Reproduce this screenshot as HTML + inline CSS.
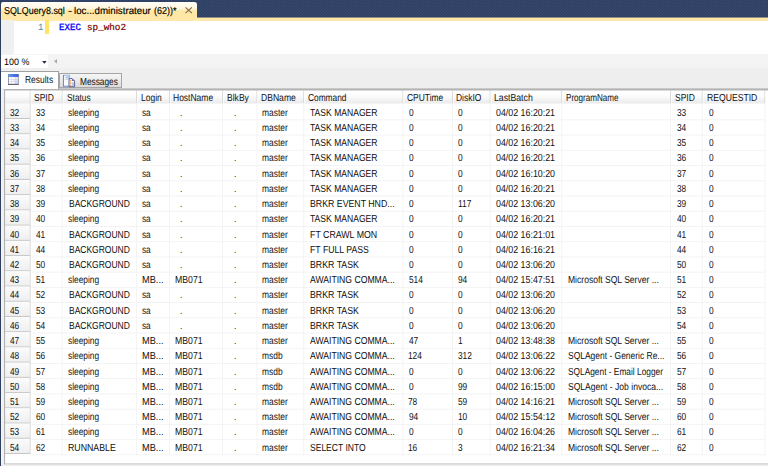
<!DOCTYPE html>
<html><head><meta charset="utf-8"><title>SQLQuery8.sql</title>
<style>
html,body{margin:0;padding:0;}
body{width:768px;height:466px;overflow:hidden;background:#fff;position:relative;font-family:"Liberation Sans",sans-serif;}
div,span{position:absolute;box-sizing:border-box;white-space:nowrap;}
.t{transform-origin:0 0;text-rendering:geometricPrecision;}
.vl{width:1px;background:#e6e6e6;}
.hl{height:1px;background:#ececec;}
svg{position:absolute;overflow:visible}
</style></head><body>

<div style="left:0;top:0;width:768px;height:18px;background-color:#2d3e61;background-image:radial-gradient(circle at 0.75px 0.75px,#374a6e 0.6px,rgba(55,74,110,0) 1px),radial-gradient(circle at 2.25px 2.25px,#374a6e 0.6px,rgba(55,74,110,0) 1px);background-size:3px 3px"></div>
<div style="left:0;top:18px;width:768px;height:2.6px;background:#ffe9a8"></div><div style="left:197.4px;top:17px;width:571px;height:1px;background:#948f84"></div>
<div style="left:1.2px;top:1.7px;width:196.2px;height:17px;background:linear-gradient(#fffdf7,#fff7e0 36%,#ffeaae 50%,#ffe8a6 58%);border-radius:2px 2.5px 0 0"></div>
<span class="t" style="left:4.30px;top:5.00px;font-size:10.00px;line-height:13px;color:#000;transform:scaleX(0.8892);-webkit-text-stroke:0.15px #000;">SQLQuery8.sql</span>
<span class="t" style="left:67.93px;top:5.00px;font-size:10.00px;line-height:13px;color:#000;transform:scaleX(1.2653);-webkit-text-stroke:0.15px #000;">-</span>
<span class="t" style="left:74.17px;top:5.00px;font-size:10.00px;line-height:13px;color:#000;transform:scaleX(0.9738);-webkit-text-stroke:0.15px #000;">loc...dministrateur</span>
<span class="t" style="left:154.36px;top:5.00px;font-size:10.00px;line-height:13px;color:#000;transform:scaleX(0.8948);-webkit-text-stroke:0.15px #000;">(62))*</span>
<svg style="left:185.3px;top:7.2px" width="7.4" height="6.6" viewBox="0 0 7.4 6.6"><path d="M0.5 0.4L6.9 6.2M6.9 0.4L0.5 6.2" stroke="#80604a" stroke-width="1.05" fill="none"/></svg>
<div style="left:0;top:20.4px;width:14px;height:34px;background:#f0f0f0"></div>
<span class="t" style="left:38.09px;top:21.00px;font-size:9.40px;line-height:13px;color:#2b91af;transform:scaleX(0.9300);font-family:'Liberation Mono',monospace;">1</span>
<div style="left:44.8px;top:20.4px;width:4.2px;height:13.2px;background:#ffe566"></div>
<span class="t" style="left:59.27px;top:21.00px;font-size:9.40px;line-height:13px;color:#0000ff;transform:scaleX(0.9750);font-family:'Liberation Mono',monospace;-webkit-text-stroke:0.3px #0000ff;">EXEC</span>
<span class="t" style="left:86.86px;top:21.00px;font-size:9.40px;line-height:13px;color:#800000;transform:scaleX(0.9900);font-family:'Liberation Mono',monospace;-webkit-text-stroke:0.2px #800000;">sp_who2</span>
<div style="left:0;top:54.2px;width:768px;height:36px;background:linear-gradient(#f4f4f4,#f3f3f3 13.8px,#efefef 14.6px,#eeeeee)"></div>
<div style="left:1.3px;top:55px;width:46.9px;height:12.5px;background:#fff"></div>
<span class="t" style="left:4.13px;top:55.00px;font-size:9.40px;line-height:13px;color:#000;transform:scaleX(0.9526);">100 %</span>
<svg style="left:41.7px;top:60.6px" width="4.8" height="2.7" viewBox="0 0 5 3"><path d="M0 0H5L2.5 3Z" fill="#1b2550"/></svg>
<svg style="left:53.7px;top:58.9px" width="3" height="4.4" viewBox="0 0 3 4.4"><path d="M3 0V4.4L0 2.2Z" fill="#a8a8a8"/></svg>
<div style="left:58px;top:88px;width:710px;height:1px;background:#c9c9c9"></div>
<div style="left:58.6px;top:73.2px;width:63.4px;height:15px;background:linear-gradient(#f6f6f6,#e9e9e9 55%,#dadada);border:1px solid #a6a6a6"></div>
<span class="t" style="left:79.93px;top:76.00px;font-size:10.20px;line-height:13px;color:#111;transform:scaleX(0.8161);">Messages</span>
<div style="left:1.3px;top:71.2px;width:57.6px;height:17.6px;background:#fff;border:1px solid #a0a0a0;border-bottom:none;border-left:none"></div>
<span class="t" style="left:25.12px;top:74.00px;font-size:10.20px;line-height:13px;color:#111;transform:scaleX(0.8282);">Results</span>
<svg style="left:8.2px;top:74.1px" width="10.7" height="10.7" viewBox="0 0 10.7 10.7"><defs><linearGradient id="bh" x1="0" y1="0" x2="1" y2="0"><stop offset="0" stop-color="#62a0ea"/><stop offset="0.45" stop-color="#4a78ea"/><stop offset="1" stop-color="#3c55e4"/></linearGradient></defs><rect x="0" y="0" width="10.7" height="10.7" fill="#777a8c"/><rect x="0.3" y="0" width="10.1" height="2.9" fill="url(#bh)"/><rect x="0.7" y="2.9" width="9.4" height="7.0" fill="#c3c3dc"/><rect x="0.9" y="3.2" width="2.7" height="1.9" fill="#fff"/><rect x="4.0" y="3.2" width="2.7" height="1.9" fill="#fff"/><rect x="7.1" y="3.2" width="2.8" height="1.9" fill="#e3ecf8"/><rect x="0.9" y="5.5" width="2.7" height="1.9" fill="#fff"/><rect x="4.0" y="5.5" width="2.7" height="1.9" fill="#f4f6fb"/><rect x="7.1" y="5.5" width="2.8" height="1.9" fill="#d5e3f5"/><rect x="0.9" y="7.8" width="2.7" height="1.9" fill="#fff"/><rect x="4.0" y="7.8" width="2.7" height="1.9" fill="#fff"/><rect x="7.1" y="7.8" width="2.8" height="1.9" fill="#cfe0f4"/><rect x="0" y="9.95" width="10.7" height="0.75" fill="#4a4a52"/></svg>
<svg style="left:63px;top:74.8px" width="12" height="12" viewBox="0 0 12 12"><rect x="0.3" y="0.2" width="6.4" height="11.4" fill="#fbfcff" stroke="#8d86d6" stroke-width="0.7"/><rect x="0.1" y="0.2" width="0.8" height="11.4" fill="#7a70d2"/><rect x="3.2" y="0.4" width="3.4" height="3.2" fill="#a8d4ef"/><path d="M1.6 2.6H5M1.6 4.6H5.6" stroke="#b9bcc8" stroke-width="0.6"/><rect x="0.6" y="10.6" width="6" height="1" fill="#7fa6dc"/><path d="M6 3.6H9.2L11.6 6V11.7H6Z" fill="#fdfdfd" stroke="#3b3a86" stroke-width="0.8"/><path d="M9.1 3.7V6.1H11.5Z" fill="#5b58a8"/><rect x="6.7" y="5.0" width="1.7" height="1.5" fill="#f2a64a"/><rect x="6.7" y="7.4" width="1.7" height="1.5" fill="#f2a64a"/><rect x="6.7" y="9.6" width="1.7" height="1.5" fill="#f2a64a"/><rect x="9" y="7.2" width="2" height="3.8" fill="#8fb7e6" opacity="0.7"/></svg>
<svg style="left:0;top:0" width="768" height="466" viewBox="0 0 768 466"><defs><linearGradient id="hg" x1="0" y1="0" x2="0" y2="1"><stop offset="0" stop-color="#ffffff"/><stop offset="0.45" stop-color="#fbfbfb"/><stop offset="1" stop-color="#ebebeb"/></linearGradient><linearGradient id="rg" x1="0" y1="0" x2="0" y2="1"><stop offset="0" stop-color="#fbfbfb"/><stop offset="1" stop-color="#efefef"/></linearGradient></defs><rect x="1.30" y="88.30" width="3.00" height="378.00" fill="#f0f0f0"/><rect x="4.30" y="89.30" width="764.00" height="374.60" fill="#ffffff"/><rect x="0.00" y="464.30" width="768.00" height="2.00" fill="#eeeeee"/><rect x="4.30" y="463.40" width="764.00" height="1.00" fill="#c4c4c4"/><rect x="4.60" y="90.30" width="761.00" height="13.10" fill="url(#hg)"/><rect x="4.60" y="103.10" width="761.00" height="0.90" fill="#f3f3f3"/><rect x="5.00" y="104.00" width="25.10" height="14.12" fill="url(#rg)"/><rect x="5.00" y="118.03" width="25.50" height="1.00" fill="#c6c6c6"/><rect x="30.30" y="119.43" width="735.30" height="0.90" fill="#f2f2f2"/><rect x="5.00" y="119.22" width="25.10" height="14.12" fill="url(#rg)"/><rect x="5.00" y="133.25" width="25.50" height="1.00" fill="#c6c6c6"/><rect x="30.30" y="134.65" width="735.30" height="0.90" fill="#f2f2f2"/><rect x="5.00" y="134.45" width="25.10" height="14.12" fill="url(#rg)"/><rect x="5.00" y="148.47" width="25.50" height="1.00" fill="#c6c6c6"/><rect x="30.30" y="149.88" width="735.30" height="0.90" fill="#f2f2f2"/><rect x="5.00" y="149.67" width="25.10" height="14.12" fill="url(#rg)"/><rect x="5.00" y="163.70" width="25.50" height="1.00" fill="#c6c6c6"/><rect x="30.30" y="165.10" width="735.30" height="0.90" fill="#f2f2f2"/><rect x="5.00" y="164.90" width="25.10" height="14.12" fill="url(#rg)"/><rect x="5.00" y="178.93" width="25.50" height="1.00" fill="#c6c6c6"/><rect x="30.30" y="180.33" width="735.30" height="0.90" fill="#f2f2f2"/><rect x="5.00" y="180.12" width="25.10" height="14.12" fill="url(#rg)"/><rect x="5.00" y="194.15" width="25.50" height="1.00" fill="#c6c6c6"/><rect x="30.30" y="195.55" width="735.30" height="0.90" fill="#f2f2f2"/><rect x="5.00" y="195.35" width="25.10" height="14.12" fill="url(#rg)"/><rect x="5.00" y="209.38" width="25.50" height="1.00" fill="#c6c6c6"/><rect x="30.30" y="210.78" width="735.30" height="0.90" fill="#f2f2f2"/><rect x="5.00" y="210.58" width="25.10" height="14.12" fill="url(#rg)"/><rect x="5.00" y="224.60" width="25.50" height="1.00" fill="#c6c6c6"/><rect x="30.30" y="226.00" width="735.30" height="0.90" fill="#f2f2f2"/><rect x="5.00" y="225.80" width="25.10" height="14.12" fill="url(#rg)"/><rect x="5.00" y="239.82" width="25.50" height="1.00" fill="#c6c6c6"/><rect x="30.30" y="241.22" width="735.30" height="0.90" fill="#f2f2f2"/><rect x="5.00" y="241.03" width="25.10" height="14.12" fill="url(#rg)"/><rect x="5.00" y="255.05" width="25.50" height="1.00" fill="#c6c6c6"/><rect x="30.30" y="256.45" width="735.30" height="0.90" fill="#f2f2f2"/><rect x="5.00" y="256.25" width="25.10" height="14.12" fill="url(#rg)"/><rect x="5.00" y="270.27" width="25.50" height="1.00" fill="#c6c6c6"/><rect x="30.30" y="271.67" width="735.30" height="0.90" fill="#f2f2f2"/><rect x="5.00" y="271.48" width="25.10" height="14.12" fill="url(#rg)"/><rect x="5.00" y="285.50" width="25.50" height="1.00" fill="#c6c6c6"/><rect x="30.30" y="286.90" width="735.30" height="0.90" fill="#f2f2f2"/><rect x="5.00" y="286.70" width="25.10" height="14.12" fill="url(#rg)"/><rect x="5.00" y="300.73" width="25.50" height="1.00" fill="#c6c6c6"/><rect x="30.30" y="302.12" width="735.30" height="0.90" fill="#f2f2f2"/><rect x="5.00" y="301.93" width="25.10" height="14.12" fill="url(#rg)"/><rect x="5.00" y="315.95" width="25.50" height="1.00" fill="#c6c6c6"/><rect x="30.30" y="317.35" width="735.30" height="0.90" fill="#f2f2f2"/><rect x="5.00" y="317.15" width="25.10" height="14.12" fill="url(#rg)"/><rect x="5.00" y="331.18" width="25.50" height="1.00" fill="#c6c6c6"/><rect x="30.30" y="332.57" width="735.30" height="0.90" fill="#f2f2f2"/><rect x="5.00" y="332.38" width="25.10" height="14.12" fill="url(#rg)"/><rect x="5.00" y="346.40" width="25.50" height="1.00" fill="#c6c6c6"/><rect x="30.30" y="347.80" width="735.30" height="0.90" fill="#f2f2f2"/><rect x="5.00" y="347.60" width="25.10" height="14.12" fill="url(#rg)"/><rect x="5.00" y="361.62" width="25.50" height="1.00" fill="#c6c6c6"/><rect x="30.30" y="363.02" width="735.30" height="0.90" fill="#f2f2f2"/><rect x="5.00" y="362.83" width="25.10" height="14.12" fill="url(#rg)"/><rect x="5.00" y="376.85" width="25.50" height="1.00" fill="#c6c6c6"/><rect x="30.30" y="378.25" width="735.30" height="0.90" fill="#f2f2f2"/><rect x="5.00" y="378.05" width="25.10" height="14.12" fill="url(#rg)"/><rect x="5.00" y="392.08" width="25.50" height="1.00" fill="#c6c6c6"/><rect x="30.30" y="393.48" width="735.30" height="0.90" fill="#f2f2f2"/><rect x="5.00" y="393.27" width="25.10" height="14.12" fill="url(#rg)"/><rect x="5.00" y="407.30" width="25.50" height="1.00" fill="#c6c6c6"/><rect x="30.30" y="408.70" width="735.30" height="0.90" fill="#f2f2f2"/><rect x="5.00" y="408.50" width="25.10" height="14.12" fill="url(#rg)"/><rect x="5.00" y="422.52" width="25.50" height="1.00" fill="#c6c6c6"/><rect x="30.30" y="423.92" width="735.30" height="0.90" fill="#f2f2f2"/><rect x="5.00" y="423.73" width="25.10" height="14.12" fill="url(#rg)"/><rect x="5.00" y="437.75" width="25.50" height="1.00" fill="#c6c6c6"/><rect x="30.30" y="439.15" width="735.30" height="0.90" fill="#f2f2f2"/><rect x="5.00" y="438.95" width="25.10" height="14.12" fill="url(#rg)"/><rect x="5.00" y="452.98" width="25.50" height="1.00" fill="#c6c6c6"/><rect x="30.30" y="454.38" width="735.30" height="0.90" fill="#f2f2f2"/><rect x="29.70" y="103.40" width="1.00" height="350.18" fill="#dcdcdc"/><rect x="29.80" y="90.60" width="0.90" height="12.40" fill="#d2d2d2"/><rect x="30.70" y="90.60" width="0.80" height="12.40" fill="#ffffff"/><rect x="61.70" y="90.60" width="0.90" height="12.40" fill="#d2d2d2"/><rect x="62.60" y="90.60" width="0.80" height="12.40" fill="#ffffff"/><rect x="136.00" y="90.60" width="0.90" height="12.40" fill="#d2d2d2"/><rect x="136.90" y="90.60" width="0.80" height="12.40" fill="#ffffff"/><rect x="169.00" y="90.60" width="0.90" height="12.40" fill="#d2d2d2"/><rect x="169.90" y="90.60" width="0.80" height="12.40" fill="#ffffff"/><rect x="222.00" y="90.60" width="0.90" height="12.40" fill="#d2d2d2"/><rect x="222.90" y="90.60" width="0.80" height="12.40" fill="#ffffff"/><rect x="256.50" y="90.60" width="0.90" height="12.40" fill="#d2d2d2"/><rect x="257.40" y="90.60" width="0.80" height="12.40" fill="#ffffff"/><rect x="303.30" y="90.60" width="0.90" height="12.40" fill="#d2d2d2"/><rect x="304.20" y="90.60" width="0.80" height="12.40" fill="#ffffff"/><rect x="402.50" y="90.60" width="0.90" height="12.40" fill="#d2d2d2"/><rect x="403.40" y="90.60" width="0.80" height="12.40" fill="#ffffff"/><rect x="452.00" y="90.60" width="0.90" height="12.40" fill="#d2d2d2"/><rect x="452.90" y="90.60" width="0.80" height="12.40" fill="#ffffff"/><rect x="489.70" y="90.60" width="0.90" height="12.40" fill="#d2d2d2"/><rect x="490.60" y="90.60" width="0.80" height="12.40" fill="#ffffff"/><rect x="561.30" y="90.60" width="0.90" height="12.40" fill="#d2d2d2"/><rect x="562.20" y="90.60" width="0.80" height="12.40" fill="#ffffff"/><rect x="670.00" y="90.60" width="0.90" height="12.40" fill="#d2d2d2"/><rect x="670.90" y="90.60" width="0.80" height="12.40" fill="#ffffff"/><rect x="701.80" y="90.60" width="0.90" height="12.40" fill="#d2d2d2"/><rect x="702.70" y="90.60" width="0.80" height="12.40" fill="#ffffff"/><rect x="764.50" y="90.60" width="0.90" height="12.40" fill="#d2d2d2"/><rect x="765.40" y="90.60" width="0.80" height="12.40" fill="#ffffff"/><rect x="61.70" y="103.90" width="0.90" height="351.58" fill="#f3f3f3"/><rect x="136.00" y="103.90" width="0.90" height="351.58" fill="#f3f3f3"/><rect x="169.00" y="103.90" width="0.90" height="351.58" fill="#f3f3f3"/><rect x="222.00" y="103.90" width="0.90" height="351.58" fill="#f3f3f3"/><rect x="256.50" y="103.90" width="0.90" height="351.58" fill="#f3f3f3"/><rect x="303.30" y="103.90" width="0.90" height="351.58" fill="#f3f3f3"/><rect x="402.50" y="103.90" width="0.90" height="351.58" fill="#f3f3f3"/><rect x="452.00" y="103.90" width="0.90" height="351.58" fill="#f3f3f3"/><rect x="489.70" y="103.90" width="0.90" height="351.58" fill="#f3f3f3"/><rect x="561.30" y="103.90" width="0.90" height="351.58" fill="#f3f3f3"/><rect x="670.00" y="103.90" width="0.90" height="351.58" fill="#f3f3f3"/><rect x="701.80" y="103.90" width="0.90" height="351.58" fill="#f3f3f3"/><rect x="764.50" y="103.90" width="0.90" height="351.58" fill="#f3f3f3"/><rect x="4.00" y="89.20" width="764.00" height="1.20" fill="#a2a2a2"/><rect x="4.00" y="89.20" width="1.10" height="375.00" fill="#b2b2b2"/></svg>
<span class="t" style="left:34.12px;top:92.00px;font-size:10.20px;line-height:13px;color:#111;transform:scaleX(0.8316);">SPID</span>
<span class="t" style="left:67.12px;top:92.00px;font-size:10.20px;line-height:13px;color:#111;transform:scaleX(0.8185);">Status</span>
<span class="t" style="left:140.57px;top:92.00px;font-size:10.20px;line-height:13px;color:#111;transform:scaleX(0.8312);">Login</span>
<span class="t" style="left:173.07px;top:92.00px;font-size:10.20px;line-height:13px;color:#111;transform:scaleX(0.8346);">HostName</span>
<span class="t" style="left:226.81px;top:92.00px;font-size:10.20px;line-height:13px;color:#111;transform:scaleX(0.8398);">BlkBy</span>
<span class="t" style="left:260.56px;top:92.00px;font-size:10.20px;line-height:13px;color:#111;transform:scaleX(0.8421);">DBName</span>
<span class="t" style="left:307.58px;top:92.00px;font-size:10.20px;line-height:13px;color:#111;transform:scaleX(0.8170);">Command</span>
<span class="t" style="left:406.58px;top:92.00px;font-size:10.20px;line-height:13px;color:#111;transform:scaleX(0.8277);">CPUTime</span>
<span class="t" style="left:456.33px;top:92.00px;font-size:10.20px;line-height:13px;color:#111;transform:scaleX(0.8267);">DiskIO</span>
<span class="t" style="left:493.80px;top:92.00px;font-size:10.20px;line-height:13px;color:#111;transform:scaleX(0.8550);">LastBatch</span>
<span class="t" style="left:566.35px;top:92.00px;font-size:10.20px;line-height:13px;color:#111;transform:scaleX(0.7929);">ProgramName</span>
<span class="t" style="left:675.12px;top:92.00px;font-size:10.20px;line-height:13px;color:#111;transform:scaleX(0.8316);">SPID</span>
<span class="t" style="left:706.56px;top:92.00px;font-size:10.20px;line-height:13px;color:#111;transform:scaleX(0.8455);">REQUESTID</span>
<span class="t" style="left:9.87px;top:107.00px;font-size:10.20px;line-height:13px;color:#111;transform:scaleX(0.8160);">32</span>
<span class="t" style="left:35.87px;top:107.00px;font-size:10.20px;line-height:13px;color:#111;transform:scaleX(0.8160);">33</span>
<span class="t" style="left:68.39px;top:107.00px;font-size:10.20px;line-height:13px;color:#111;transform:scaleX(0.8188);">sleeping</span>
<span class="t" style="left:141.99px;top:107.00px;font-size:10.20px;line-height:13px;color:#111;transform:scaleX(0.8091);">sa</span>
<span class="t" style="left:180.15px;top:107.00px;font-size:10.20px;line-height:13px;color:#111;transform:scaleX(0.8160);">.</span>
<span class="t" style="left:233.85px;top:107.00px;font-size:10.20px;line-height:13px;color:#111;transform:scaleX(0.8160);">.</span>
<span class="t" style="left:261.65px;top:107.00px;font-size:10.20px;line-height:13px;color:#111;transform:scaleX(0.8258);">master</span>
<span class="t" style="left:310.13px;top:107.00px;font-size:10.20px;line-height:13px;color:#111;transform:scaleX(0.8416);">TASK MANAGER</span>
<span class="t" style="left:408.57px;top:107.00px;font-size:10.20px;line-height:13px;color:#111;transform:scaleX(0.8160);">0</span>
<span class="t" style="left:458.27px;top:107.00px;font-size:10.20px;line-height:13px;color:#111;transform:scaleX(0.8160);">0</span>
<span class="t" style="left:496.05px;top:107.00px;font-size:10.20px;line-height:13px;color:#111;transform:scaleX(0.8680);">04/02 16:20:21</span>
<span class="t" style="left:676.67px;top:107.00px;font-size:10.20px;line-height:13px;color:#111;transform:scaleX(0.8160);">33</span>
<span class="t" style="left:708.67px;top:107.00px;font-size:10.20px;line-height:13px;color:#111;transform:scaleX(0.8160);">0</span>
<span class="t" style="left:9.87px;top:122.00px;font-size:10.20px;line-height:13px;color:#111;transform:scaleX(0.8160);">33</span>
<span class="t" style="left:35.87px;top:122.00px;font-size:10.20px;line-height:13px;color:#111;transform:scaleX(0.8160);">34</span>
<span class="t" style="left:68.39px;top:122.00px;font-size:10.20px;line-height:13px;color:#111;transform:scaleX(0.8188);">sleeping</span>
<span class="t" style="left:141.99px;top:122.00px;font-size:10.20px;line-height:13px;color:#111;transform:scaleX(0.8091);">sa</span>
<span class="t" style="left:180.15px;top:122.00px;font-size:10.20px;line-height:13px;color:#111;transform:scaleX(0.8160);">.</span>
<span class="t" style="left:233.85px;top:122.00px;font-size:10.20px;line-height:13px;color:#111;transform:scaleX(0.8160);">.</span>
<span class="t" style="left:261.65px;top:122.00px;font-size:10.20px;line-height:13px;color:#111;transform:scaleX(0.8258);">master</span>
<span class="t" style="left:310.13px;top:122.00px;font-size:10.20px;line-height:13px;color:#111;transform:scaleX(0.8416);">TASK MANAGER</span>
<span class="t" style="left:408.57px;top:122.00px;font-size:10.20px;line-height:13px;color:#111;transform:scaleX(0.8160);">0</span>
<span class="t" style="left:458.27px;top:122.00px;font-size:10.20px;line-height:13px;color:#111;transform:scaleX(0.8160);">0</span>
<span class="t" style="left:496.05px;top:122.00px;font-size:10.20px;line-height:13px;color:#111;transform:scaleX(0.8680);">04/02 16:20:21</span>
<span class="t" style="left:676.67px;top:122.00px;font-size:10.20px;line-height:13px;color:#111;transform:scaleX(0.8160);">34</span>
<span class="t" style="left:708.67px;top:122.00px;font-size:10.20px;line-height:13px;color:#111;transform:scaleX(0.8160);">0</span>
<span class="t" style="left:9.87px;top:137.00px;font-size:10.20px;line-height:13px;color:#111;transform:scaleX(0.8160);">34</span>
<span class="t" style="left:35.87px;top:137.00px;font-size:10.20px;line-height:13px;color:#111;transform:scaleX(0.8160);">35</span>
<span class="t" style="left:68.39px;top:137.00px;font-size:10.20px;line-height:13px;color:#111;transform:scaleX(0.8188);">sleeping</span>
<span class="t" style="left:141.99px;top:137.00px;font-size:10.20px;line-height:13px;color:#111;transform:scaleX(0.8091);">sa</span>
<span class="t" style="left:180.15px;top:137.00px;font-size:10.20px;line-height:13px;color:#111;transform:scaleX(0.8160);">.</span>
<span class="t" style="left:233.85px;top:137.00px;font-size:10.20px;line-height:13px;color:#111;transform:scaleX(0.8160);">.</span>
<span class="t" style="left:261.65px;top:137.00px;font-size:10.20px;line-height:13px;color:#111;transform:scaleX(0.8258);">master</span>
<span class="t" style="left:310.13px;top:137.00px;font-size:10.20px;line-height:13px;color:#111;transform:scaleX(0.8416);">TASK MANAGER</span>
<span class="t" style="left:408.57px;top:137.00px;font-size:10.20px;line-height:13px;color:#111;transform:scaleX(0.8160);">0</span>
<span class="t" style="left:458.27px;top:137.00px;font-size:10.20px;line-height:13px;color:#111;transform:scaleX(0.8160);">0</span>
<span class="t" style="left:496.05px;top:137.00px;font-size:10.20px;line-height:13px;color:#111;transform:scaleX(0.8680);">04/02 16:20:21</span>
<span class="t" style="left:676.67px;top:137.00px;font-size:10.20px;line-height:13px;color:#111;transform:scaleX(0.8160);">35</span>
<span class="t" style="left:708.67px;top:137.00px;font-size:10.20px;line-height:13px;color:#111;transform:scaleX(0.8160);">0</span>
<span class="t" style="left:9.87px;top:152.00px;font-size:10.20px;line-height:13px;color:#111;transform:scaleX(0.8160);">35</span>
<span class="t" style="left:35.87px;top:152.00px;font-size:10.20px;line-height:13px;color:#111;transform:scaleX(0.8160);">36</span>
<span class="t" style="left:68.39px;top:152.00px;font-size:10.20px;line-height:13px;color:#111;transform:scaleX(0.8188);">sleeping</span>
<span class="t" style="left:141.99px;top:152.00px;font-size:10.20px;line-height:13px;color:#111;transform:scaleX(0.8091);">sa</span>
<span class="t" style="left:180.15px;top:152.00px;font-size:10.20px;line-height:13px;color:#111;transform:scaleX(0.8160);">.</span>
<span class="t" style="left:233.85px;top:152.00px;font-size:10.20px;line-height:13px;color:#111;transform:scaleX(0.8160);">.</span>
<span class="t" style="left:261.65px;top:152.00px;font-size:10.20px;line-height:13px;color:#111;transform:scaleX(0.8258);">master</span>
<span class="t" style="left:310.13px;top:152.00px;font-size:10.20px;line-height:13px;color:#111;transform:scaleX(0.8416);">TASK MANAGER</span>
<span class="t" style="left:408.57px;top:152.00px;font-size:10.20px;line-height:13px;color:#111;transform:scaleX(0.8160);">0</span>
<span class="t" style="left:458.27px;top:152.00px;font-size:10.20px;line-height:13px;color:#111;transform:scaleX(0.8160);">0</span>
<span class="t" style="left:496.05px;top:152.00px;font-size:10.20px;line-height:13px;color:#111;transform:scaleX(0.8680);">04/02 16:20:21</span>
<span class="t" style="left:676.67px;top:152.00px;font-size:10.20px;line-height:13px;color:#111;transform:scaleX(0.8160);">36</span>
<span class="t" style="left:708.67px;top:152.00px;font-size:10.20px;line-height:13px;color:#111;transform:scaleX(0.8160);">0</span>
<span class="t" style="left:9.87px;top:168.00px;font-size:10.20px;line-height:13px;color:#111;transform:scaleX(0.8160);">36</span>
<span class="t" style="left:35.87px;top:168.00px;font-size:10.20px;line-height:13px;color:#111;transform:scaleX(0.8160);">37</span>
<span class="t" style="left:68.39px;top:168.00px;font-size:10.20px;line-height:13px;color:#111;transform:scaleX(0.8188);">sleeping</span>
<span class="t" style="left:141.99px;top:168.00px;font-size:10.20px;line-height:13px;color:#111;transform:scaleX(0.8091);">sa</span>
<span class="t" style="left:180.15px;top:168.00px;font-size:10.20px;line-height:13px;color:#111;transform:scaleX(0.8160);">.</span>
<span class="t" style="left:233.85px;top:168.00px;font-size:10.20px;line-height:13px;color:#111;transform:scaleX(0.8160);">.</span>
<span class="t" style="left:261.65px;top:168.00px;font-size:10.20px;line-height:13px;color:#111;transform:scaleX(0.8258);">master</span>
<span class="t" style="left:310.13px;top:168.00px;font-size:10.20px;line-height:13px;color:#111;transform:scaleX(0.8416);">TASK MANAGER</span>
<span class="t" style="left:408.57px;top:168.00px;font-size:10.20px;line-height:13px;color:#111;transform:scaleX(0.8160);">0</span>
<span class="t" style="left:458.27px;top:168.00px;font-size:10.20px;line-height:13px;color:#111;transform:scaleX(0.8160);">0</span>
<span class="t" style="left:496.05px;top:168.00px;font-size:10.20px;line-height:13px;color:#111;transform:scaleX(0.8680);">04/02 16:10:20</span>
<span class="t" style="left:676.67px;top:168.00px;font-size:10.20px;line-height:13px;color:#111;transform:scaleX(0.8160);">37</span>
<span class="t" style="left:708.67px;top:168.00px;font-size:10.20px;line-height:13px;color:#111;transform:scaleX(0.8160);">0</span>
<span class="t" style="left:9.87px;top:183.00px;font-size:10.20px;line-height:13px;color:#111;transform:scaleX(0.8160);">37</span>
<span class="t" style="left:35.87px;top:183.00px;font-size:10.20px;line-height:13px;color:#111;transform:scaleX(0.8160);">38</span>
<span class="t" style="left:68.39px;top:183.00px;font-size:10.20px;line-height:13px;color:#111;transform:scaleX(0.8188);">sleeping</span>
<span class="t" style="left:141.99px;top:183.00px;font-size:10.20px;line-height:13px;color:#111;transform:scaleX(0.8091);">sa</span>
<span class="t" style="left:180.15px;top:183.00px;font-size:10.20px;line-height:13px;color:#111;transform:scaleX(0.8160);">.</span>
<span class="t" style="left:233.85px;top:183.00px;font-size:10.20px;line-height:13px;color:#111;transform:scaleX(0.8160);">.</span>
<span class="t" style="left:261.65px;top:183.00px;font-size:10.20px;line-height:13px;color:#111;transform:scaleX(0.8258);">master</span>
<span class="t" style="left:310.13px;top:183.00px;font-size:10.20px;line-height:13px;color:#111;transform:scaleX(0.8416);">TASK MANAGER</span>
<span class="t" style="left:408.57px;top:183.00px;font-size:10.20px;line-height:13px;color:#111;transform:scaleX(0.8160);">0</span>
<span class="t" style="left:458.27px;top:183.00px;font-size:10.20px;line-height:13px;color:#111;transform:scaleX(0.8160);">0</span>
<span class="t" style="left:496.05px;top:183.00px;font-size:10.20px;line-height:13px;color:#111;transform:scaleX(0.8680);">04/02 16:20:21</span>
<span class="t" style="left:676.67px;top:183.00px;font-size:10.20px;line-height:13px;color:#111;transform:scaleX(0.8160);">38</span>
<span class="t" style="left:708.67px;top:183.00px;font-size:10.20px;line-height:13px;color:#111;transform:scaleX(0.8160);">0</span>
<span class="t" style="left:9.87px;top:198.00px;font-size:10.20px;line-height:13px;color:#111;transform:scaleX(0.8160);">38</span>
<span class="t" style="left:35.87px;top:198.00px;font-size:10.20px;line-height:13px;color:#111;transform:scaleX(0.8160);">39</span>
<span class="t" style="left:68.72px;top:198.00px;font-size:10.20px;line-height:13px;color:#111;transform:scaleX(0.8328);">BACKGROUND</span>
<span class="t" style="left:141.99px;top:198.00px;font-size:10.20px;line-height:13px;color:#111;transform:scaleX(0.8091);">sa</span>
<span class="t" style="left:180.15px;top:198.00px;font-size:10.20px;line-height:13px;color:#111;transform:scaleX(0.8160);">.</span>
<span class="t" style="left:233.85px;top:198.00px;font-size:10.20px;line-height:13px;color:#111;transform:scaleX(0.8160);">.</span>
<span class="t" style="left:261.65px;top:198.00px;font-size:10.20px;line-height:13px;color:#111;transform:scaleX(0.8258);">master</span>
<span class="t" style="left:309.60px;top:198.00px;font-size:10.20px;line-height:13px;color:#111;transform:scaleX(0.8604);">BRKR EVENT HND...</span>
<span class="t" style="left:408.57px;top:198.00px;font-size:10.20px;line-height:13px;color:#111;transform:scaleX(0.8160);">0</span>
<span class="t" style="left:457.98px;top:198.00px;font-size:10.20px;line-height:13px;color:#111;transform:scaleX(0.8160);">117</span>
<span class="t" style="left:496.05px;top:198.00px;font-size:10.20px;line-height:13px;color:#111;transform:scaleX(0.8680);">04/02 13:06:20</span>
<span class="t" style="left:676.67px;top:198.00px;font-size:10.20px;line-height:13px;color:#111;transform:scaleX(0.8160);">39</span>
<span class="t" style="left:708.67px;top:198.00px;font-size:10.20px;line-height:13px;color:#111;transform:scaleX(0.8160);">0</span>
<span class="t" style="left:9.87px;top:213.00px;font-size:10.20px;line-height:13px;color:#111;transform:scaleX(0.8160);">39</span>
<span class="t" style="left:36.03px;top:213.00px;font-size:10.20px;line-height:13px;color:#111;transform:scaleX(0.8160);">40</span>
<span class="t" style="left:68.39px;top:213.00px;font-size:10.20px;line-height:13px;color:#111;transform:scaleX(0.8188);">sleeping</span>
<span class="t" style="left:141.99px;top:213.00px;font-size:10.20px;line-height:13px;color:#111;transform:scaleX(0.8091);">sa</span>
<span class="t" style="left:180.15px;top:213.00px;font-size:10.20px;line-height:13px;color:#111;transform:scaleX(0.8160);">.</span>
<span class="t" style="left:233.85px;top:213.00px;font-size:10.20px;line-height:13px;color:#111;transform:scaleX(0.8160);">.</span>
<span class="t" style="left:261.65px;top:213.00px;font-size:10.20px;line-height:13px;color:#111;transform:scaleX(0.8258);">master</span>
<span class="t" style="left:310.13px;top:213.00px;font-size:10.20px;line-height:13px;color:#111;transform:scaleX(0.8416);">TASK MANAGER</span>
<span class="t" style="left:408.57px;top:213.00px;font-size:10.20px;line-height:13px;color:#111;transform:scaleX(0.8160);">0</span>
<span class="t" style="left:458.27px;top:213.00px;font-size:10.20px;line-height:13px;color:#111;transform:scaleX(0.8160);">0</span>
<span class="t" style="left:496.05px;top:213.00px;font-size:10.20px;line-height:13px;color:#111;transform:scaleX(0.8680);">04/02 16:20:21</span>
<span class="t" style="left:676.83px;top:213.00px;font-size:10.20px;line-height:13px;color:#111;transform:scaleX(0.8160);">40</span>
<span class="t" style="left:708.67px;top:213.00px;font-size:10.20px;line-height:13px;color:#111;transform:scaleX(0.8160);">0</span>
<span class="t" style="left:10.03px;top:229.00px;font-size:10.20px;line-height:13px;color:#111;transform:scaleX(0.8160);">40</span>
<span class="t" style="left:36.03px;top:229.00px;font-size:10.20px;line-height:13px;color:#111;transform:scaleX(0.8160);">41</span>
<span class="t" style="left:68.72px;top:229.00px;font-size:10.20px;line-height:13px;color:#111;transform:scaleX(0.8328);">BACKGROUND</span>
<span class="t" style="left:141.99px;top:229.00px;font-size:10.20px;line-height:13px;color:#111;transform:scaleX(0.8091);">sa</span>
<span class="t" style="left:180.15px;top:229.00px;font-size:10.20px;line-height:13px;color:#111;transform:scaleX(0.8160);">.</span>
<span class="t" style="left:233.85px;top:229.00px;font-size:10.20px;line-height:13px;color:#111;transform:scaleX(0.8160);">.</span>
<span class="t" style="left:261.65px;top:229.00px;font-size:10.20px;line-height:13px;color:#111;transform:scaleX(0.8258);">master</span>
<span class="t" style="left:309.59px;top:229.00px;font-size:10.20px;line-height:13px;color:#111;transform:scaleX(0.8642);">FT CRAWL MON</span>
<span class="t" style="left:408.57px;top:229.00px;font-size:10.20px;line-height:13px;color:#111;transform:scaleX(0.8160);">0</span>
<span class="t" style="left:458.27px;top:229.00px;font-size:10.20px;line-height:13px;color:#111;transform:scaleX(0.8160);">0</span>
<span class="t" style="left:496.05px;top:229.00px;font-size:10.20px;line-height:13px;color:#111;transform:scaleX(0.8680);">04/02 16:21:01</span>
<span class="t" style="left:676.83px;top:229.00px;font-size:10.20px;line-height:13px;color:#111;transform:scaleX(0.8160);">41</span>
<span class="t" style="left:708.67px;top:229.00px;font-size:10.20px;line-height:13px;color:#111;transform:scaleX(0.8160);">0</span>
<span class="t" style="left:10.03px;top:244.00px;font-size:10.20px;line-height:13px;color:#111;transform:scaleX(0.8160);">41</span>
<span class="t" style="left:36.03px;top:244.00px;font-size:10.20px;line-height:13px;color:#111;transform:scaleX(0.8160);">44</span>
<span class="t" style="left:68.72px;top:244.00px;font-size:10.20px;line-height:13px;color:#111;transform:scaleX(0.8328);">BACKGROUND</span>
<span class="t" style="left:141.99px;top:244.00px;font-size:10.20px;line-height:13px;color:#111;transform:scaleX(0.8091);">sa</span>
<span class="t" style="left:180.15px;top:244.00px;font-size:10.20px;line-height:13px;color:#111;transform:scaleX(0.8160);">.</span>
<span class="t" style="left:233.85px;top:244.00px;font-size:10.20px;line-height:13px;color:#111;transform:scaleX(0.8160);">.</span>
<span class="t" style="left:261.65px;top:244.00px;font-size:10.20px;line-height:13px;color:#111;transform:scaleX(0.8258);">master</span>
<span class="t" style="left:309.60px;top:244.00px;font-size:10.20px;line-height:13px;color:#111;transform:scaleX(0.8541);">FT FULL PASS</span>
<span class="t" style="left:408.57px;top:244.00px;font-size:10.20px;line-height:13px;color:#111;transform:scaleX(0.8160);">0</span>
<span class="t" style="left:458.27px;top:244.00px;font-size:10.20px;line-height:13px;color:#111;transform:scaleX(0.8160);">0</span>
<span class="t" style="left:496.05px;top:244.00px;font-size:10.20px;line-height:13px;color:#111;transform:scaleX(0.8680);">04/02 16:16:21</span>
<span class="t" style="left:676.83px;top:244.00px;font-size:10.20px;line-height:13px;color:#111;transform:scaleX(0.8160);">44</span>
<span class="t" style="left:708.67px;top:244.00px;font-size:10.20px;line-height:13px;color:#111;transform:scaleX(0.8160);">0</span>
<span class="t" style="left:10.03px;top:259.00px;font-size:10.20px;line-height:13px;color:#111;transform:scaleX(0.8160);">42</span>
<span class="t" style="left:35.87px;top:259.00px;font-size:10.20px;line-height:13px;color:#111;transform:scaleX(0.8160);">50</span>
<span class="t" style="left:68.72px;top:259.00px;font-size:10.20px;line-height:13px;color:#111;transform:scaleX(0.8328);">BACKGROUND</span>
<span class="t" style="left:141.99px;top:259.00px;font-size:10.20px;line-height:13px;color:#111;transform:scaleX(0.8091);">sa</span>
<span class="t" style="left:180.15px;top:259.00px;font-size:10.20px;line-height:13px;color:#111;transform:scaleX(0.8160);">.</span>
<span class="t" style="left:233.85px;top:259.00px;font-size:10.20px;line-height:13px;color:#111;transform:scaleX(0.8160);">.</span>
<span class="t" style="left:261.65px;top:259.00px;font-size:10.20px;line-height:13px;color:#111;transform:scaleX(0.8258);">master</span>
<span class="t" style="left:309.60px;top:259.00px;font-size:10.20px;line-height:13px;color:#111;transform:scaleX(0.8615);">BRKR TASK</span>
<span class="t" style="left:408.57px;top:259.00px;font-size:10.20px;line-height:13px;color:#111;transform:scaleX(0.8160);">0</span>
<span class="t" style="left:458.27px;top:259.00px;font-size:10.20px;line-height:13px;color:#111;transform:scaleX(0.8160);">0</span>
<span class="t" style="left:496.05px;top:259.00px;font-size:10.20px;line-height:13px;color:#111;transform:scaleX(0.8680);">04/02 13:06:20</span>
<span class="t" style="left:676.67px;top:259.00px;font-size:10.20px;line-height:13px;color:#111;transform:scaleX(0.8160);">50</span>
<span class="t" style="left:708.67px;top:259.00px;font-size:10.20px;line-height:13px;color:#111;transform:scaleX(0.8160);">0</span>
<span class="t" style="left:10.03px;top:274.00px;font-size:10.20px;line-height:13px;color:#111;transform:scaleX(0.8160);">43</span>
<span class="t" style="left:35.87px;top:274.00px;font-size:10.20px;line-height:13px;color:#111;transform:scaleX(0.8160);">51</span>
<span class="t" style="left:68.39px;top:274.00px;font-size:10.20px;line-height:13px;color:#111;transform:scaleX(0.8188);">sleeping</span>
<span class="t" style="left:142.26px;top:274.00px;font-size:10.20px;line-height:13px;color:#111;transform:scaleX(0.9057);">MB...</span>
<span class="t" style="left:175.40px;top:274.00px;font-size:10.20px;line-height:13px;color:#111;transform:scaleX(0.8546);">MB071</span>
<span class="t" style="left:233.85px;top:274.00px;font-size:10.20px;line-height:13px;color:#111;transform:scaleX(0.8160);">.</span>
<span class="t" style="left:261.65px;top:274.00px;font-size:10.20px;line-height:13px;color:#111;transform:scaleX(0.8258);">master</span>
<span class="t" style="left:310.30px;top:274.00px;font-size:10.20px;line-height:13px;color:#111;transform:scaleX(0.8478);">AWAITING COMMA...</span>
<span class="t" style="left:408.57px;top:274.00px;font-size:10.20px;line-height:13px;color:#111;transform:scaleX(0.8160);">514</span>
<span class="t" style="left:458.23px;top:274.00px;font-size:10.20px;line-height:13px;color:#111;transform:scaleX(0.8160);">94</span>
<span class="t" style="left:496.05px;top:274.00px;font-size:10.20px;line-height:13px;color:#111;transform:scaleX(0.8680);">04/02 15:47:51</span>
<span class="t" style="left:567.72px;top:274.00px;font-size:10.20px;line-height:13px;color:#111;transform:scaleX(0.8385);">Microsoft SQL Server ...</span>
<span class="t" style="left:676.67px;top:274.00px;font-size:10.20px;line-height:13px;color:#111;transform:scaleX(0.8160);">51</span>
<span class="t" style="left:708.67px;top:274.00px;font-size:10.20px;line-height:13px;color:#111;transform:scaleX(0.8160);">0</span>
<span class="t" style="left:10.03px;top:289.00px;font-size:10.20px;line-height:13px;color:#111;transform:scaleX(0.8160);">44</span>
<span class="t" style="left:35.87px;top:289.00px;font-size:10.20px;line-height:13px;color:#111;transform:scaleX(0.8160);">52</span>
<span class="t" style="left:68.72px;top:289.00px;font-size:10.20px;line-height:13px;color:#111;transform:scaleX(0.8328);">BACKGROUND</span>
<span class="t" style="left:141.99px;top:289.00px;font-size:10.20px;line-height:13px;color:#111;transform:scaleX(0.8091);">sa</span>
<span class="t" style="left:180.15px;top:289.00px;font-size:10.20px;line-height:13px;color:#111;transform:scaleX(0.8160);">.</span>
<span class="t" style="left:233.85px;top:289.00px;font-size:10.20px;line-height:13px;color:#111;transform:scaleX(0.8160);">.</span>
<span class="t" style="left:261.65px;top:289.00px;font-size:10.20px;line-height:13px;color:#111;transform:scaleX(0.8258);">master</span>
<span class="t" style="left:309.60px;top:289.00px;font-size:10.20px;line-height:13px;color:#111;transform:scaleX(0.8615);">BRKR TASK</span>
<span class="t" style="left:408.57px;top:289.00px;font-size:10.20px;line-height:13px;color:#111;transform:scaleX(0.8160);">0</span>
<span class="t" style="left:458.27px;top:289.00px;font-size:10.20px;line-height:13px;color:#111;transform:scaleX(0.8160);">0</span>
<span class="t" style="left:496.05px;top:289.00px;font-size:10.20px;line-height:13px;color:#111;transform:scaleX(0.8680);">04/02 13:06:20</span>
<span class="t" style="left:676.67px;top:289.00px;font-size:10.20px;line-height:13px;color:#111;transform:scaleX(0.8160);">52</span>
<span class="t" style="left:708.67px;top:289.00px;font-size:10.20px;line-height:13px;color:#111;transform:scaleX(0.8160);">0</span>
<span class="t" style="left:10.03px;top:305.00px;font-size:10.20px;line-height:13px;color:#111;transform:scaleX(0.8160);">45</span>
<span class="t" style="left:35.87px;top:305.00px;font-size:10.20px;line-height:13px;color:#111;transform:scaleX(0.8160);">53</span>
<span class="t" style="left:68.72px;top:305.00px;font-size:10.20px;line-height:13px;color:#111;transform:scaleX(0.8328);">BACKGROUND</span>
<span class="t" style="left:141.99px;top:305.00px;font-size:10.20px;line-height:13px;color:#111;transform:scaleX(0.8091);">sa</span>
<span class="t" style="left:180.15px;top:305.00px;font-size:10.20px;line-height:13px;color:#111;transform:scaleX(0.8160);">.</span>
<span class="t" style="left:233.85px;top:305.00px;font-size:10.20px;line-height:13px;color:#111;transform:scaleX(0.8160);">.</span>
<span class="t" style="left:261.65px;top:305.00px;font-size:10.20px;line-height:13px;color:#111;transform:scaleX(0.8258);">master</span>
<span class="t" style="left:309.60px;top:305.00px;font-size:10.20px;line-height:13px;color:#111;transform:scaleX(0.8615);">BRKR TASK</span>
<span class="t" style="left:408.57px;top:305.00px;font-size:10.20px;line-height:13px;color:#111;transform:scaleX(0.8160);">0</span>
<span class="t" style="left:458.27px;top:305.00px;font-size:10.20px;line-height:13px;color:#111;transform:scaleX(0.8160);">0</span>
<span class="t" style="left:496.05px;top:305.00px;font-size:10.20px;line-height:13px;color:#111;transform:scaleX(0.8680);">04/02 13:06:20</span>
<span class="t" style="left:676.67px;top:305.00px;font-size:10.20px;line-height:13px;color:#111;transform:scaleX(0.8160);">53</span>
<span class="t" style="left:708.67px;top:305.00px;font-size:10.20px;line-height:13px;color:#111;transform:scaleX(0.8160);">0</span>
<span class="t" style="left:10.03px;top:320.00px;font-size:10.20px;line-height:13px;color:#111;transform:scaleX(0.8160);">46</span>
<span class="t" style="left:35.87px;top:320.00px;font-size:10.20px;line-height:13px;color:#111;transform:scaleX(0.8160);">54</span>
<span class="t" style="left:68.72px;top:320.00px;font-size:10.20px;line-height:13px;color:#111;transform:scaleX(0.8328);">BACKGROUND</span>
<span class="t" style="left:141.99px;top:320.00px;font-size:10.20px;line-height:13px;color:#111;transform:scaleX(0.8091);">sa</span>
<span class="t" style="left:180.15px;top:320.00px;font-size:10.20px;line-height:13px;color:#111;transform:scaleX(0.8160);">.</span>
<span class="t" style="left:233.85px;top:320.00px;font-size:10.20px;line-height:13px;color:#111;transform:scaleX(0.8160);">.</span>
<span class="t" style="left:261.65px;top:320.00px;font-size:10.20px;line-height:13px;color:#111;transform:scaleX(0.8258);">master</span>
<span class="t" style="left:309.60px;top:320.00px;font-size:10.20px;line-height:13px;color:#111;transform:scaleX(0.8615);">BRKR TASK</span>
<span class="t" style="left:408.57px;top:320.00px;font-size:10.20px;line-height:13px;color:#111;transform:scaleX(0.8160);">0</span>
<span class="t" style="left:458.27px;top:320.00px;font-size:10.20px;line-height:13px;color:#111;transform:scaleX(0.8160);">0</span>
<span class="t" style="left:496.05px;top:320.00px;font-size:10.20px;line-height:13px;color:#111;transform:scaleX(0.8680);">04/02 13:06:20</span>
<span class="t" style="left:676.67px;top:320.00px;font-size:10.20px;line-height:13px;color:#111;transform:scaleX(0.8160);">54</span>
<span class="t" style="left:708.67px;top:320.00px;font-size:10.20px;line-height:13px;color:#111;transform:scaleX(0.8160);">0</span>
<span class="t" style="left:10.03px;top:335.00px;font-size:10.20px;line-height:13px;color:#111;transform:scaleX(0.8160);">47</span>
<span class="t" style="left:35.87px;top:335.00px;font-size:10.20px;line-height:13px;color:#111;transform:scaleX(0.8160);">55</span>
<span class="t" style="left:68.39px;top:335.00px;font-size:10.20px;line-height:13px;color:#111;transform:scaleX(0.8188);">sleeping</span>
<span class="t" style="left:142.26px;top:335.00px;font-size:10.20px;line-height:13px;color:#111;transform:scaleX(0.9057);">MB...</span>
<span class="t" style="left:175.40px;top:335.00px;font-size:10.20px;line-height:13px;color:#111;transform:scaleX(0.8546);">MB071</span>
<span class="t" style="left:233.85px;top:335.00px;font-size:10.20px;line-height:13px;color:#111;transform:scaleX(0.8160);">.</span>
<span class="t" style="left:261.65px;top:335.00px;font-size:10.20px;line-height:13px;color:#111;transform:scaleX(0.8258);">master</span>
<span class="t" style="left:310.30px;top:335.00px;font-size:10.20px;line-height:13px;color:#111;transform:scaleX(0.8478);">AWAITING COMMA...</span>
<span class="t" style="left:408.73px;top:335.00px;font-size:10.20px;line-height:13px;color:#111;transform:scaleX(0.8160);">47</span>
<span class="t" style="left:457.98px;top:335.00px;font-size:10.20px;line-height:13px;color:#111;transform:scaleX(0.8160);">1</span>
<span class="t" style="left:496.05px;top:335.00px;font-size:10.20px;line-height:13px;color:#111;transform:scaleX(0.8680);">04/02 13:48:38</span>
<span class="t" style="left:567.72px;top:335.00px;font-size:10.20px;line-height:13px;color:#111;transform:scaleX(0.8385);">Microsoft SQL Server ...</span>
<span class="t" style="left:676.67px;top:335.00px;font-size:10.20px;line-height:13px;color:#111;transform:scaleX(0.8160);">55</span>
<span class="t" style="left:708.67px;top:335.00px;font-size:10.20px;line-height:13px;color:#111;transform:scaleX(0.8160);">0</span>
<span class="t" style="left:10.03px;top:350.00px;font-size:10.20px;line-height:13px;color:#111;transform:scaleX(0.8160);">48</span>
<span class="t" style="left:35.87px;top:350.00px;font-size:10.20px;line-height:13px;color:#111;transform:scaleX(0.8160);">56</span>
<span class="t" style="left:68.39px;top:350.00px;font-size:10.20px;line-height:13px;color:#111;transform:scaleX(0.8188);">sleeping</span>
<span class="t" style="left:142.26px;top:350.00px;font-size:10.20px;line-height:13px;color:#111;transform:scaleX(0.9057);">MB...</span>
<span class="t" style="left:175.40px;top:350.00px;font-size:10.20px;line-height:13px;color:#111;transform:scaleX(0.8546);">MB071</span>
<span class="t" style="left:233.85px;top:350.00px;font-size:10.20px;line-height:13px;color:#111;transform:scaleX(0.8160);">.</span>
<span class="t" style="left:261.65px;top:350.00px;font-size:10.20px;line-height:13px;color:#111;transform:scaleX(0.8254);">msdb</span>
<span class="t" style="left:310.30px;top:350.00px;font-size:10.20px;line-height:13px;color:#111;transform:scaleX(0.8478);">AWAITING COMMA...</span>
<span class="t" style="left:408.28px;top:350.00px;font-size:10.20px;line-height:13px;color:#111;transform:scaleX(0.8160);">124</span>
<span class="t" style="left:458.27px;top:350.00px;font-size:10.20px;line-height:13px;color:#111;transform:scaleX(0.8160);">312</span>
<span class="t" style="left:496.05px;top:350.00px;font-size:10.20px;line-height:13px;color:#111;transform:scaleX(0.8680);">04/02 13:06:22</span>
<span class="t" style="left:568.02px;top:350.00px;font-size:10.20px;line-height:13px;color:#111;transform:scaleX(0.8306);">SQLAgent - Generic Re...</span>
<span class="t" style="left:676.67px;top:350.00px;font-size:10.20px;line-height:13px;color:#111;transform:scaleX(0.8160);">56</span>
<span class="t" style="left:708.67px;top:350.00px;font-size:10.20px;line-height:13px;color:#111;transform:scaleX(0.8160);">0</span>
<span class="t" style="left:10.03px;top:366.00px;font-size:10.20px;line-height:13px;color:#111;transform:scaleX(0.8160);">49</span>
<span class="t" style="left:35.87px;top:366.00px;font-size:10.20px;line-height:13px;color:#111;transform:scaleX(0.8160);">57</span>
<span class="t" style="left:68.39px;top:366.00px;font-size:10.20px;line-height:13px;color:#111;transform:scaleX(0.8188);">sleeping</span>
<span class="t" style="left:142.26px;top:366.00px;font-size:10.20px;line-height:13px;color:#111;transform:scaleX(0.9057);">MB...</span>
<span class="t" style="left:175.40px;top:366.00px;font-size:10.20px;line-height:13px;color:#111;transform:scaleX(0.8546);">MB071</span>
<span class="t" style="left:233.85px;top:366.00px;font-size:10.20px;line-height:13px;color:#111;transform:scaleX(0.8160);">.</span>
<span class="t" style="left:261.65px;top:366.00px;font-size:10.20px;line-height:13px;color:#111;transform:scaleX(0.8254);">msdb</span>
<span class="t" style="left:310.30px;top:366.00px;font-size:10.20px;line-height:13px;color:#111;transform:scaleX(0.8478);">AWAITING COMMA...</span>
<span class="t" style="left:408.57px;top:366.00px;font-size:10.20px;line-height:13px;color:#111;transform:scaleX(0.8160);">0</span>
<span class="t" style="left:458.27px;top:366.00px;font-size:10.20px;line-height:13px;color:#111;transform:scaleX(0.8160);">0</span>
<span class="t" style="left:496.05px;top:366.00px;font-size:10.20px;line-height:13px;color:#111;transform:scaleX(0.8680);">04/02 13:06:22</span>
<span class="t" style="left:568.02px;top:366.00px;font-size:10.20px;line-height:13px;color:#111;transform:scaleX(0.8182);">SQLAgent - Email Logger</span>
<span class="t" style="left:676.67px;top:366.00px;font-size:10.20px;line-height:13px;color:#111;transform:scaleX(0.8160);">57</span>
<span class="t" style="left:708.67px;top:366.00px;font-size:10.20px;line-height:13px;color:#111;transform:scaleX(0.8160);">0</span>
<span class="t" style="left:9.87px;top:381.00px;font-size:10.20px;line-height:13px;color:#111;transform:scaleX(0.8160);">50</span>
<span class="t" style="left:35.87px;top:381.00px;font-size:10.20px;line-height:13px;color:#111;transform:scaleX(0.8160);">58</span>
<span class="t" style="left:68.39px;top:381.00px;font-size:10.20px;line-height:13px;color:#111;transform:scaleX(0.8188);">sleeping</span>
<span class="t" style="left:142.26px;top:381.00px;font-size:10.20px;line-height:13px;color:#111;transform:scaleX(0.9057);">MB...</span>
<span class="t" style="left:175.40px;top:381.00px;font-size:10.20px;line-height:13px;color:#111;transform:scaleX(0.8546);">MB071</span>
<span class="t" style="left:233.85px;top:381.00px;font-size:10.20px;line-height:13px;color:#111;transform:scaleX(0.8160);">.</span>
<span class="t" style="left:261.65px;top:381.00px;font-size:10.20px;line-height:13px;color:#111;transform:scaleX(0.8254);">msdb</span>
<span class="t" style="left:310.30px;top:381.00px;font-size:10.20px;line-height:13px;color:#111;transform:scaleX(0.8478);">AWAITING COMMA...</span>
<span class="t" style="left:408.57px;top:381.00px;font-size:10.20px;line-height:13px;color:#111;transform:scaleX(0.8160);">0</span>
<span class="t" style="left:458.23px;top:381.00px;font-size:10.20px;line-height:13px;color:#111;transform:scaleX(0.8160);">99</span>
<span class="t" style="left:496.05px;top:381.00px;font-size:10.20px;line-height:13px;color:#111;transform:scaleX(0.8680);">04/02 16:15:00</span>
<span class="t" style="left:568.01px;top:381.00px;font-size:10.20px;line-height:13px;color:#111;transform:scaleX(0.8398);">SQLAgent - Job invoca...</span>
<span class="t" style="left:676.67px;top:381.00px;font-size:10.20px;line-height:13px;color:#111;transform:scaleX(0.8160);">58</span>
<span class="t" style="left:708.67px;top:381.00px;font-size:10.20px;line-height:13px;color:#111;transform:scaleX(0.8160);">0</span>
<span class="t" style="left:9.87px;top:396.00px;font-size:10.20px;line-height:13px;color:#111;transform:scaleX(0.8160);">51</span>
<span class="t" style="left:35.87px;top:396.00px;font-size:10.20px;line-height:13px;color:#111;transform:scaleX(0.8160);">59</span>
<span class="t" style="left:68.39px;top:396.00px;font-size:10.20px;line-height:13px;color:#111;transform:scaleX(0.8188);">sleeping</span>
<span class="t" style="left:142.26px;top:396.00px;font-size:10.20px;line-height:13px;color:#111;transform:scaleX(0.9057);">MB...</span>
<span class="t" style="left:175.40px;top:396.00px;font-size:10.20px;line-height:13px;color:#111;transform:scaleX(0.8546);">MB071</span>
<span class="t" style="left:233.85px;top:396.00px;font-size:10.20px;line-height:13px;color:#111;transform:scaleX(0.8160);">.</span>
<span class="t" style="left:261.65px;top:396.00px;font-size:10.20px;line-height:13px;color:#111;transform:scaleX(0.8258);">master</span>
<span class="t" style="left:310.30px;top:396.00px;font-size:10.20px;line-height:13px;color:#111;transform:scaleX(0.8478);">AWAITING COMMA...</span>
<span class="t" style="left:408.48px;top:396.00px;font-size:10.20px;line-height:13px;color:#111;transform:scaleX(0.8160);">78</span>
<span class="t" style="left:458.27px;top:396.00px;font-size:10.20px;line-height:13px;color:#111;transform:scaleX(0.8160);">59</span>
<span class="t" style="left:496.05px;top:396.00px;font-size:10.20px;line-height:13px;color:#111;transform:scaleX(0.8680);">04/02 14:16:21</span>
<span class="t" style="left:567.72px;top:396.00px;font-size:10.20px;line-height:13px;color:#111;transform:scaleX(0.8385);">Microsoft SQL Server ...</span>
<span class="t" style="left:676.67px;top:396.00px;font-size:10.20px;line-height:13px;color:#111;transform:scaleX(0.8160);">59</span>
<span class="t" style="left:708.67px;top:396.00px;font-size:10.20px;line-height:13px;color:#111;transform:scaleX(0.8160);">0</span>
<span class="t" style="left:9.87px;top:411.00px;font-size:10.20px;line-height:13px;color:#111;transform:scaleX(0.8160);">52</span>
<span class="t" style="left:35.78px;top:411.00px;font-size:10.20px;line-height:13px;color:#111;transform:scaleX(0.8160);">60</span>
<span class="t" style="left:68.39px;top:411.00px;font-size:10.20px;line-height:13px;color:#111;transform:scaleX(0.8188);">sleeping</span>
<span class="t" style="left:142.26px;top:411.00px;font-size:10.20px;line-height:13px;color:#111;transform:scaleX(0.9057);">MB...</span>
<span class="t" style="left:175.40px;top:411.00px;font-size:10.20px;line-height:13px;color:#111;transform:scaleX(0.8546);">MB071</span>
<span class="t" style="left:233.85px;top:411.00px;font-size:10.20px;line-height:13px;color:#111;transform:scaleX(0.8160);">.</span>
<span class="t" style="left:261.65px;top:411.00px;font-size:10.20px;line-height:13px;color:#111;transform:scaleX(0.8258);">master</span>
<span class="t" style="left:310.30px;top:411.00px;font-size:10.20px;line-height:13px;color:#111;transform:scaleX(0.8478);">AWAITING COMMA...</span>
<span class="t" style="left:408.53px;top:411.00px;font-size:10.20px;line-height:13px;color:#111;transform:scaleX(0.8160);">94</span>
<span class="t" style="left:457.98px;top:411.00px;font-size:10.20px;line-height:13px;color:#111;transform:scaleX(0.8160);">10</span>
<span class="t" style="left:496.05px;top:411.00px;font-size:10.20px;line-height:13px;color:#111;transform:scaleX(0.8680);">04/02 15:54:12</span>
<span class="t" style="left:567.72px;top:411.00px;font-size:10.20px;line-height:13px;color:#111;transform:scaleX(0.8385);">Microsoft SQL Server ...</span>
<span class="t" style="left:676.58px;top:411.00px;font-size:10.20px;line-height:13px;color:#111;transform:scaleX(0.8160);">60</span>
<span class="t" style="left:708.67px;top:411.00px;font-size:10.20px;line-height:13px;color:#111;transform:scaleX(0.8160);">0</span>
<span class="t" style="left:9.87px;top:426.00px;font-size:10.20px;line-height:13px;color:#111;transform:scaleX(0.8160);">53</span>
<span class="t" style="left:35.78px;top:426.00px;font-size:10.20px;line-height:13px;color:#111;transform:scaleX(0.8160);">61</span>
<span class="t" style="left:68.39px;top:426.00px;font-size:10.20px;line-height:13px;color:#111;transform:scaleX(0.8188);">sleeping</span>
<span class="t" style="left:142.26px;top:426.00px;font-size:10.20px;line-height:13px;color:#111;transform:scaleX(0.9057);">MB...</span>
<span class="t" style="left:175.40px;top:426.00px;font-size:10.20px;line-height:13px;color:#111;transform:scaleX(0.8546);">MB071</span>
<span class="t" style="left:233.85px;top:426.00px;font-size:10.20px;line-height:13px;color:#111;transform:scaleX(0.8160);">.</span>
<span class="t" style="left:261.65px;top:426.00px;font-size:10.20px;line-height:13px;color:#111;transform:scaleX(0.8258);">master</span>
<span class="t" style="left:310.30px;top:426.00px;font-size:10.20px;line-height:13px;color:#111;transform:scaleX(0.8478);">AWAITING COMMA...</span>
<span class="t" style="left:408.57px;top:426.00px;font-size:10.20px;line-height:13px;color:#111;transform:scaleX(0.8160);">0</span>
<span class="t" style="left:458.27px;top:426.00px;font-size:10.20px;line-height:13px;color:#111;transform:scaleX(0.8160);">0</span>
<span class="t" style="left:496.05px;top:426.00px;font-size:10.20px;line-height:13px;color:#111;transform:scaleX(0.8680);">04/02 16:04:26</span>
<span class="t" style="left:567.72px;top:426.00px;font-size:10.20px;line-height:13px;color:#111;transform:scaleX(0.8385);">Microsoft SQL Server ...</span>
<span class="t" style="left:676.58px;top:426.00px;font-size:10.20px;line-height:13px;color:#111;transform:scaleX(0.8160);">61</span>
<span class="t" style="left:708.67px;top:426.00px;font-size:10.20px;line-height:13px;color:#111;transform:scaleX(0.8160);">0</span>
<span class="t" style="left:9.87px;top:442.00px;font-size:10.20px;line-height:13px;color:#111;transform:scaleX(0.8160);">54</span>
<span class="t" style="left:35.78px;top:442.00px;font-size:10.20px;line-height:13px;color:#111;transform:scaleX(0.8160);">62</span>
<span class="t" style="left:68.40px;top:442.00px;font-size:10.20px;line-height:13px;color:#111;transform:scaleX(0.8616);">RUNNABLE</span>
<span class="t" style="left:142.26px;top:442.00px;font-size:10.20px;line-height:13px;color:#111;transform:scaleX(0.9057);">MB...</span>
<span class="t" style="left:175.40px;top:442.00px;font-size:10.20px;line-height:13px;color:#111;transform:scaleX(0.8546);">MB071</span>
<span class="t" style="left:233.85px;top:442.00px;font-size:10.20px;line-height:13px;color:#111;transform:scaleX(0.8160);">.</span>
<span class="t" style="left:261.65px;top:442.00px;font-size:10.20px;line-height:13px;color:#111;transform:scaleX(0.8258);">master</span>
<span class="t" style="left:309.92px;top:442.00px;font-size:10.20px;line-height:13px;color:#111;transform:scaleX(0.8371);">SELECT INTO</span>
<span class="t" style="left:408.28px;top:442.00px;font-size:10.20px;line-height:13px;color:#111;transform:scaleX(0.8160);">16</span>
<span class="t" style="left:458.27px;top:442.00px;font-size:10.20px;line-height:13px;color:#111;transform:scaleX(0.8160);">3</span>
<span class="t" style="left:496.05px;top:442.00px;font-size:10.20px;line-height:13px;color:#111;transform:scaleX(0.8680);">04/02 16:21:34</span>
<span class="t" style="left:567.72px;top:442.00px;font-size:10.20px;line-height:13px;color:#111;transform:scaleX(0.8385);">Microsoft SQL Server ...</span>
<span class="t" style="left:676.58px;top:442.00px;font-size:10.20px;line-height:13px;color:#111;transform:scaleX(0.8160);">62</span>
<span class="t" style="left:708.67px;top:442.00px;font-size:10.20px;line-height:13px;color:#111;transform:scaleX(0.8160);">0</span>
<div style="left:0;top:0;width:1.4px;height:466px;background:#2d3e61"></div>
</body></html>
